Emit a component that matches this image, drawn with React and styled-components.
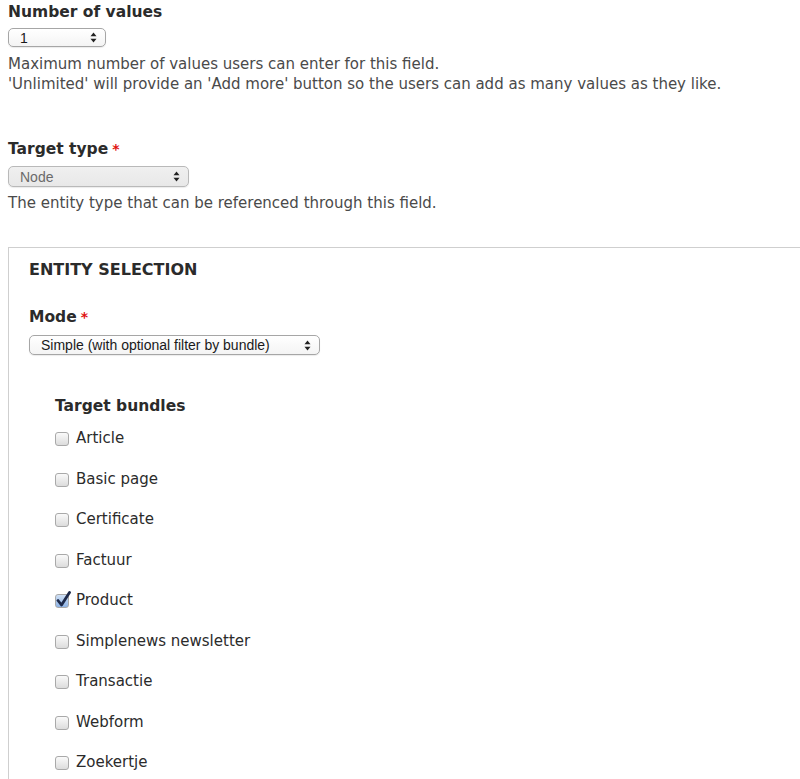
import React from "react";
import styled, { createGlobalStyle } from "styled-components";

const GlobalStyle = createGlobalStyle`
  html, body {
    margin: 0;
    padding: 0;
    background: #fff;
    overflow: hidden;
  }
  body {
    font-family: "DejaVu Sans", "Noto Sans", sans-serif;
    color: #333;
  }
`;

const Page = styled.div`
  padding: 0 0 0 8px;
  width: 820px;
  height: 779px;
  overflow: hidden;
`;

const Label = styled.div`
  font-size: 15.5px;
  font-weight: bold;
  line-height: 24px;
  color: #2b2b2b;
  margin-top: ${(p) => p.top || 0}px;
`;

const Required = styled.span`
  color: #e0120f;
  margin-left: 4px;
  font-size: 14px;
  vertical-align: top;
`;

const SelectBox = styled.div`
  box-sizing: border-box;
  display: flex;
  align-items: center;
  justify-content: space-between;
  width: ${(p) => p.width}px;
  height: ${(p) => p.height || 19}px;
  margin-top: ${(p) => p.top || 4}px;
  padding: 0 8px 0 11px;
  border: 1px solid ${(p) => (p.disabled ? "#b9b9b9" : "#a6a6a6")};
  border-radius: 5px;
  background: ${(p) =>
    p.disabled
      ? "linear-gradient(#f0f0f0, #e8e8e8)"
      : "linear-gradient(#ffffff, #f4f4f4)"};
  font-family: "Liberation Sans", Arial, sans-serif;
  font-size: 14px;
  color: ${(p) => (p.disabled ? "#6a6a6a" : "#1a1a1a")};
  box-shadow: 0 1px 1px rgba(0, 0, 0, 0.08);
`;

const Description = styled.div`
  font-size: 15px;
  line-height: 20px;
  color: #4a4a4a;
  margin-top: ${(p) => p.top || 0}px;
`;

const Fieldset = styled.div`
  margin-top: 34px;
  border: 1px solid #cfcfcf;
  border-right: none;
  padding: 11px 0 30px 20px;
`;

const Legend = styled.div`
  font-size: 16px;
  font-weight: bold;
  line-height: 22px;
  text-transform: uppercase;
  color: #2b2b2b;
`;

const Bundles = styled.div`
  padding-left: 26px;
`;

const Row = styled.label`
  display: flex;
  align-items: center;
  height: 40.5px;
  font-size: 15px;
  color: #2b2b2b;
`;

const Box = styled.span`
  position: relative;
  box-sizing: border-box;
  width: 14px;
  height: 14px;
  margin-right: 7px;
  margin-top: 2px;
  border: 1px solid #a9a9a9;
  border-radius: 3px;
  background: ${(p) =>
    p.checked
      ? "linear-gradient(#cfe0f5, #8fb4e6)"
      : "linear-gradient(#fafafa, #dcdcdc)"};
  flex-shrink: 0;
`;

const Tick = styled.svg`
  position: absolute;
  left: 0px;
  top: -4px;
`;

const Arrows = () => (
  <svg width="7" height="11" viewBox="0 0 7 11">
    <path d="M3.5 0.5 L6.5 4.3 L0.5 4.3 Z" fill="#222" />
    <path d="M3.5 10.5 L6.5 6.7 L0.5 6.7 Z" fill="#222" />
  </svg>
);

const Select = ({ value, ...rest }) => (
  <SelectBox {...rest}>
    <span>{value}</span>
    <Arrows />
  </SelectBox>
);

const Checkbox = ({ label, checked }) => (
  <Row>
    <Box checked={checked}>
      {checked && (
        <Tick width="15" height="16" viewBox="0 0 15 16">
          <path
            d="M2 9.5 L5.5 14 L13.5 1.5"
            fill="none"
            stroke="#1d2a4a"
            strokeWidth="2.8"
            strokeLinecap="round"
            strokeLinejoin="round"
          />
        </Tick>
      )}
    </Box>
    {label}
  </Row>
);

const bundles = [
  { name: "Article" },
  { name: "Basic page" },
  { name: "Certificate" },
  { name: "Factuur" },
  { name: "Product", checked: true },
  { name: "Simplenews newsletter" },
  { name: "Transactie" },
  { name: "Webform" },
  { name: "Zoekertje" },
];

export default function App() {
  return (
    <Page>
      <GlobalStyle />
      <Label>Number of values</Label>
      <Select value="1" width={98} height={19} top={4} />
      <Description top={7}>
        Maximum number of values users can enter for this field.
        <br />
        'Unlimited' will provide an 'Add more' button so the users can add as many values as they like.
      </Description>

      <Label top={43}>
        Target type<Required>*</Required>
      </Label>
      <Select value="Node" width={181} height={21} top={5} disabled />
      <Description top={6}>The entity type that can be referenced through this field.</Description>

      <Fieldset>
        <Legend>Entity selection</Legend>
        <Label top={24}>
          Mode<Required>*</Required>
        </Label>
        <Select value="Simple (with optional filter by bundle)" width={291} height={20} top={6} />
        <Bundles>
          <Label top={39}>Target bundles</Label>
          {bundles.map((b) => (
            <Checkbox key={b.name} label={b.name} checked={b.checked} />
          ))}
        </Bundles>
      </Fieldset>
    </Page>
  );
}
